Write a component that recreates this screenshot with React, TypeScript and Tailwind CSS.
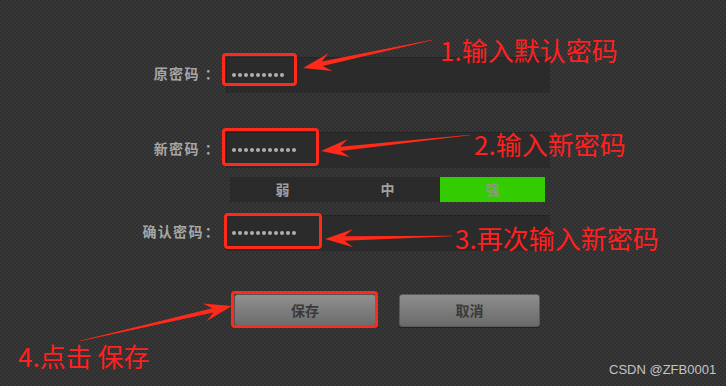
import React from "react";

const cjk = { fontFamily: '"Noto Sans CJK SC", "Noto Sans", sans-serif' };

type Pt = [number, number];

// tapered arrow: thin tail, swept head at tip
function arrowPoints(tail: Pt, tip: Pt, headLen = 28, headW = 18, w0 = 0.6, w1 = 4.5) {
  const dx = tip[0] - tail[0];
  const dy = tip[1] - tail[1];
  const len = Math.hypot(dx, dy);
  const ux = dx / len;
  const uy = dy / len;
  const nx = -uy;
  const ny = ux;
  const at = (d: number, o: number): string =>
    `${(tail[0] + ux * d + nx * o).toFixed(1)},${(tail[1] + uy * d + ny * o).toFixed(1)}`;
  const neck = len - headLen * 0.7;
  const base = len - headLen;
  return [
    at(0, w0 / 2),
    at(neck, w1 / 2),
    at(base, headW / 2),
    at(len, 0),
    at(base, -headW / 2),
    at(neck, -w1 / 2),
    at(0, -w0 / 2),
  ].join(" ");
}

const arrows: { tail: Pt; tip: Pt }[] = [
  { tail: [432, 40], tip: [303, 68] },
  { tail: [470, 135], tip: [321, 151] },
  { tail: [452, 236], tip: [325, 239] },
  { tail: [80, 341], tip: [232, 306] },
];

function Dots({ n }: { n: number }) {
  return (
    <div className="flex gap-[2px]">
      {Array.from({ length: n }).map((_, i) => (
        <span key={i} className="h-[4px] w-[4px] rounded-full bg-[#b0b0b0]" />
      ))}
    </div>
  );
}

function Field({
  label,
  dots,
  box,
  tail = "ml-[5px]",
}: {
  label: string;
  dots: number;
  box: string;
  tail?: string;
}) {
  return (
    <div className="flex h-[36px] items-center">
      <div className="-mt-[3px] flex w-[226px] justify-end pr-[6px] text-[14px] font-bold tracking-[1.3px] text-[#a6a6a6]" style={cjk}>
        <span>{label}</span>
        <span className={tail}>：</span>
      </div>
      <div className="relative flex h-full w-[324px] items-center bg-[#2b2b2b] pl-[6px] shadow-[inset_1px_1px_0_#242424]">
        <Dots n={dots} />
        <div className={`absolute rounded-[4px] border-[3px] border-[#ff2a1a] ${box}`} />
      </div>
    </div>
  );
}

export default function App() {
  return (
    <div
      className="relative h-[386px] w-[726px] overflow-hidden bg-[#333] bg-[image:repeating-conic-gradient(#383838_0_25%,#2f2f2f_0_50%)] bg-[length:4px_4px]"
      style={cjk}
    >
      {/* FORM */}
      <div className="pt-[57px]">
        <Field label="原密码" dots={9} box="-left-[4px] -top-[4px] h-[33px] w-[75px]" />

        <div className="mt-[39px]">
          <Field label="新密码" dots={11} box="-left-[4px] -top-[4px] h-[38px] w-[97px]" />
        </div>

        {/* STRENGTH */}
        <div className="ml-[230px] mt-[9px] flex h-[25px] w-[315px] bg-[#2a2a2a] text-[14px] font-bold">
          <div className="flex flex-1 items-center justify-center text-[#a0a0a0]">弱</div>
          <div className="flex flex-1 items-center justify-center text-[#a0a0a0]">中</div>
          <div className="flex flex-1 items-center justify-center bg-[#33cc00] text-[#8a9a86]">强</div>
        </div>

        <div className="mt-[13px]">
          <Field label="确认密码" dots={11} tail="ml-[1px]" box="-left-[2px] -top-[2px] h-[36px] w-[98px]" />
        </div>

        {/* BUTTONS */}
        <div className="ml-[234px] mt-[43px] flex gap-[23px]">
          <div className="relative">
            <button className="flex h-[32px] w-[142px] items-center justify-center rounded-[3px] border border-[#555] bg-linear-to-b from-[#909090] to-[#6c6c6c] text-[14px] font-bold text-[#3a3a3a]">
              保存
            </button>
            <div className="absolute -left-[3px] -top-[3px] h-[37px] w-[147px] rounded-[4px] border-[3px] border-[#ff2a1a]" />
          </div>
          <button className="flex h-[33px] w-[141px] items-center justify-center rounded-[3px] border border-[#5a5a5a] bg-linear-to-b from-[#8e8e8e] to-[#6a6a6a] text-[14px] font-bold text-[#3a3a3a] shadow-[0_1px_0_#222]">
            取消
          </button>
        </div>
      </div>

      {/* ANNOTATIONS */}
      <svg className="absolute inset-0" width={726} height={386}>
        {arrows.map((a, i) => (
          <polygon key={i} points={arrowPoints(a.tail, a.tip)} fill="#ff2a1a" />
        ))}
      </svg>
      <div className="absolute left-[440px] top-[33px] text-[26px] leading-[34px] text-[#ff2020]">1.输入默认密码</div>
      <div className="absolute left-[474px] top-[127px] text-[26px] leading-[34px] text-[#ff2020]">2.输入新密码</div>
      <div className="absolute left-[455px] top-[221px] text-[26px] leading-[34px] text-[#ff2020]">3.再次输入新密码</div>
      <div className="absolute left-[18px] top-[339px] text-[26px] leading-[34px] text-[#ff2020]">4.点击 保存</div>

      <div
        className="absolute left-[609px] top-[360px] text-[13px] text-[#c4c4c4]"
        style={{ fontFamily: '"Liberation Sans", Arial, sans-serif' }}
      >
        CSDN @ZFB0001
      </div>
    </div>
  );
}
